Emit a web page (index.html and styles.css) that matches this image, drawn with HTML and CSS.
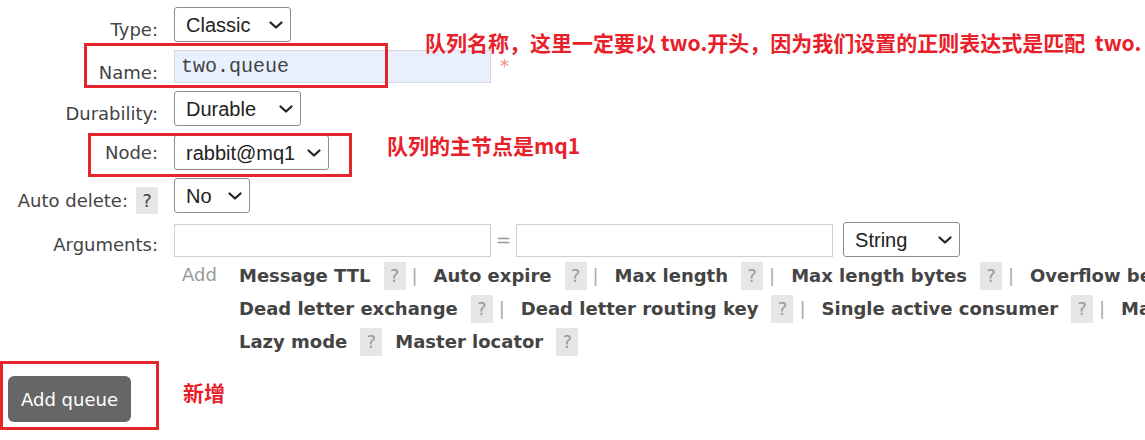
FILE: index.html
```html
<!DOCTYPE html>
<html lang="zh-CN">
<head>
    <meta charset="UTF-8">
    <meta name="viewport" content="width=device-width, initial-scale=1.0">
    <title>Add a new queue</title>
    <link rel="stylesheet" href="styles.css">
</head>
<body>
    <div class="sheet">
        <div class="form">
            <div class="form-label">Type:</div>
            <div class="form-value">
                <span class="select-wrap">
                    <select class="select select-type"><option>Classic</option></select>
                    <svg class="chevron" viewBox="0 0 14 8"><path d="M1.5 1.5 L7 6.5 L12.5 1.5"/></svg>
                </span>
            </div>

            <div class="form-label">Name:</div>
            <div class="form-value">
                <input class="input input-name" type="text" value="two.queue">
                <span class="required">*</span>
            </div>

            <div class="form-label">Durability:</div>
            <div class="form-value">
                <span class="select-wrap">
                    <select class="select select-durability"><option>Durable</option></select>
                    <svg class="chevron" viewBox="0 0 14 8"><path d="M1.5 1.5 L7 6.5 L12.5 1.5"/></svg>
                </span>
            </div>

            <div class="form-label raised">Node:</div>
            <div class="form-value node-value">
                <span class="select-wrap">
                    <select class="select select-node"><option>rabbit@mq1</option></select>
                    <svg class="chevron" viewBox="0 0 14 8"><path d="M1.5 1.5 L7 6.5 L12.5 1.5"/></svg>
                </span>
                <span class="note note-node">队列的主节点是mq1</span>
            </div>

            <div class="form-label with-help">
                <span>Auto delete:</span>
                <span class="help help-dark">?</span>
            </div>
            <div class="form-value">
                <span class="select-wrap">
                    <select class="select select-bool"><option>No</option></select>
                    <svg class="chevron" viewBox="0 0 14 8"><path d="M1.5 1.5 L7 6.5 L12.5 1.5"/></svg>
                </span>
            </div>

            <div class="form-label">Arguments:</div>
            <div class="form-value stacked">
                <div class="arg-row">
                    <input class="input input-arg" type="text">
                    <span class="equals">=</span>
                    <input class="input input-arg" type="text">
                    <span class="select-wrap">
                        <select class="select select-kind"><option>String</option></select>
                        <svg class="chevron" viewBox="0 0 14 8"><path d="M1.5 1.5 L7 6.5 L12.5 1.5"/></svg>
                    </span>
                </div>
                <div class="arg-add">
                    <span class="arg-add-link">Add</span>
                    <div class="arg-lines">
                        <div class="arg-line">
                            <span class="arg-name">Message TTL</span><span class="help">?</span><span class="sep">|</span>
                            <span class="arg-name">Auto expire</span><span class="help">?</span><span class="sep">|</span>
                            <span class="arg-name">Max length</span><span class="help">?</span><span class="sep">|</span>
                            <span class="arg-name">Max length bytes</span><span class="help">?</span><span class="sep">|</span>
                            <span class="arg-name">Overflow behaviour</span><span class="help">?</span><span class="sep">|</span>
                        </div>
                        <div class="arg-line">
                            <span class="arg-name">Dead letter exchange</span><span class="help">?</span><span class="sep">|</span>
                            <span class="arg-name">Dead letter routing key</span><span class="help">?</span><span class="sep">|</span>
                            <span class="arg-name">Single active consumer</span><span class="help">?</span><span class="sep">|</span>
                            <span class="arg-name">Maximum priority</span><span class="help">?</span>
                        </div>
                        <div class="arg-line">
                            <span class="arg-name">Lazy mode</span><span class="help">?</span>
                            <span class="arg-name spaced">Master locator</span><span class="help">?</span>
                        </div>
                    </div>
                </div>
            </div>
        </div>

        <div class="submit-row">
            <button class="button" type="button">Add queue</button>
            <span class="note note-submit">新增</span>
        </div>

        <!-- annotation layer drawn over the form -->
        <div class="mark mark-name"></div>
        <div class="mark mark-node"></div>
        <div class="mark mark-submit"></div>
        <div class="note note-name">队列名称，这里一定要以 two.开头，因为我们设置的正则表达式是匹配&nbsp; two.</div>
    </div>
</body>
</html>
```

FILE: styles.css
```css
body {
    margin: 0;
    padding: 0;
    background: #fff;
    overflow: hidden;
    font-family: "DejaVu Sans", Verdana, sans-serif;
    font-size: 18px;
    color: #444;
}
.sheet {
    position: relative;
    width: 1145px;
    height: 440px;
    overflow: hidden;
}
.form {
    display: grid;
    grid-template-columns: 158px minmax(0, 1fr);
    column-gap: 16px;
    row-gap: 8px;
    padding-top: 7px;
    align-items: start;
}
.form-label {
    text-align: right;
    padding-top: 13px;
    line-height: 20px;
    white-space: nowrap;
}
.form-label.raised {
    padding-top: 9px;
}
.form-label.with-help {
    display: flex;
    justify-content: flex-end;
    align-items: center;
    gap: 8px;
    padding-top: 9px;
}
.form-value {
    display: flex;
    align-items: flex-start;
}
.form-value.node-value {
    padding-top: 1px;
}
.form-value.stacked {
    flex-direction: column;
    gap: 2px;
}

.select-wrap {
    position: relative;
    display: inline-flex;
}
.select {
    appearance: none;
    -webkit-appearance: none;
    box-sizing: border-box;
    height: 35px;
    padding: 0 0 0 11px;
    border: 1px solid #8c8c8c;
    border-radius: 3px;
    background: #fff;
    font-family: "Liberation Sans", Arial, sans-serif;
    font-size: 20px;
    color: #222;
}
.select-type { width: 117px; }
.select-durability { width: 127px; }
.select-node { width: 155px; }
.select-bool { width: 76px; }
.select-kind { width: 117px; }
.chevron {
    position: absolute;
    right: 8px;
    top: 14px;
    width: 14px;
    height: 8px;
    pointer-events: none;
}
.chevron path {
    fill: none;
    stroke: #222;
    stroke-width: 2.2;
    stroke-linecap: round;
    stroke-linejoin: round;
}

.input {
    box-sizing: border-box;
    width: 317px;
    height: 33px;
    padding: 0 6px;
    border: 1px solid #cfcfcf;
    background: #fff;
    font-family: "Liberation Mono", "Courier New", monospace;
    font-size: 20px;
    color: #444;
}
.input-name {
    background: #e8f0fe;
    border-color: #d3d9e2;
}
.required {
    margin: 6px 0 0 9px;
    line-height: 20px;
    color: #f08a8a;
}

.arg-row {
    display: flex;
    align-items: center;
    height: 35px;
}
.input-arg {
    margin-top: 1px;
}
.equals {
    margin: 0 5px;
    color: #999;
}
.arg-row .select-wrap {
    margin-left: 10px;
}
.arg-add {
    display: flex;
    padding-left: 8px;
}
.arg-add-link {
    width: 57px;
    line-height: 31px;
    color: #999;
}
.arg-line {
    display: flex;
    align-items: center;
    height: 33px;
    white-space: nowrap;
}
.arg-name {
    font-weight: bold;
    color: #444;
}
.arg-name.spaced {
    margin-left: 13px;
}
.help {
    display: inline-flex;
    align-items: center;
    justify-content: center;
    width: 22px;
    height: 28px;
    margin-left: 13px;
    background: #e6e6e6;
    color: #9a9a9a;
}
.help-dark {
    height: 27px;
    margin-left: 0;
    color: #444;
}
.sep {
    margin: 0 16px 0 6px;
    color: #aaa;
}

.submit-row {
    display: flex;
    align-items: flex-start;
    gap: 52px;
    margin-top: 18px;
    padding-left: 8px;
}
.button {
    height: 46px;
    padding: 0 13px;
    border: none;
    border-radius: 6px;
    background: #666;
    color: #fff;
    font-family: "DejaVu Sans", Verdana, sans-serif;
    font-size: 18px;
}

.note {
    font-family: "Noto Sans CJK SC", sans-serif;
    font-weight: bold;
    font-size: 21px;
    line-height: 21px;
    color: #e8202a;
    white-space: nowrap;
}
.note-node {
    margin: 0 0 0 58px;
}
.note-submit {
    margin-top: 6px;
}
.note-name {
    position: absolute;
    left: 425px;
    top: 32px;
}

.mark {
    position: absolute;
    box-sizing: border-box;
    border: 3px solid #e5252d;
}
.mark-name {
    left: 84px;
    top: 43px;
    width: 304px;
    height: 45px;
}
.mark-node {
    left: 88px;
    top: 133px;
    width: 264px;
    height: 44px;
}
.mark-submit {
    left: 0;
    top: 361px;
    width: 159px;
    height: 69px;
}
```
